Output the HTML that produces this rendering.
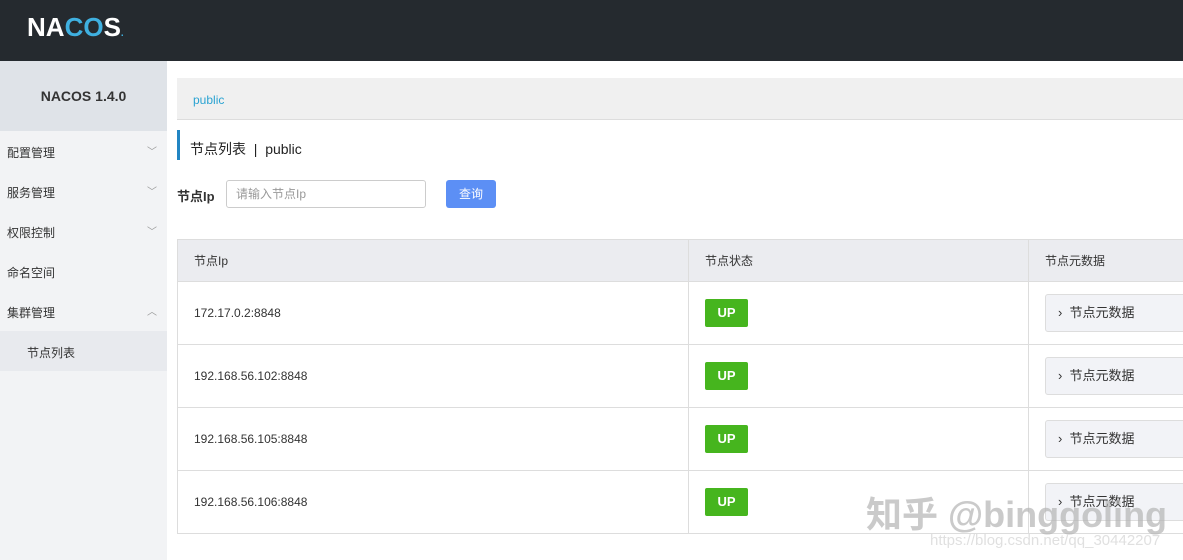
<!DOCTYPE html>
<html><head><meta charset="utf-8"><style>
*{margin:0;padding:0;box-sizing:border-box}
body{width:1183px;height:560px;overflow:hidden;background:#fff;font-family:"Liberation Sans","Noto Sans CJK SC",sans-serif;color:#333;position:relative}
.top{position:absolute;left:0;top:0;width:1183px;height:61px;background:#252a2f}
.logo{position:absolute;left:27px;top:12px;color:#fff;font-size:26px;font-weight:bold;letter-spacing:0px}
.side{position:absolute;left:0;top:61px;width:167px;height:499px;background:#f2f3f5}
.ver{height:70px;background:#dfe3e8;text-align:center;line-height:70px;font-weight:bold;font-size:14px;color:#333}
.mi{height:40px;line-height:44px;padding-left:7px;font-size:12px;color:#333;position:relative}
.mi .ar{position:absolute;right:10px;top:0;color:#999;font-size:10px}
.sub{background:#e8eaee;padding-left:27px}
.bc{position:absolute;left:177px;top:78px;width:1006px;height:42px;background:#f0f0f0;border-bottom:1px solid #ddd;color:#2aa3d2;font-size:12px;line-height:44px;padding-left:16px}
.tt{position:absolute;left:177px;top:130px;height:30px;border-left:3px solid #2285c3;padding-left:10px;line-height:38px;font-size:14px;color:#222}
.lab{position:absolute;left:177px;top:186px;font-weight:bold;font-size:13px}
.inp{position:absolute;left:226px;top:180px;width:200px;height:28px;border:1px solid #ccc;border-radius:3px;font-size:12px;color:#999;line-height:26px;padding-left:9px}
.btn{position:absolute;left:446px;top:180px;width:50px;height:28px;background:#5c8ff5;border-radius:3px;color:#fff;font-size:12px;text-align:center;line-height:28px}
table{position:absolute;left:177px;top:239px;border-collapse:collapse;width:1020px}
td{border:1px solid #ddd;font-size:12px;padding-left:16px;height:63px}
tr.h td{background:#ebecf0;height:42px}
.up{display:inline-block;width:43px;height:28px;background:#46b51e;color:#fff;border-radius:2px;text-align:center;line-height:28px;font-weight:bold;font-size:13px}
.md{display:inline-block;width:150px;height:38px;background:#f2f3f7;border:1px solid #ddd;border-radius:3px;line-height:36px;padding-left:12px;font-size:13px}
.wm{position:absolute;left:866px;top:486px;font-size:36px;color:rgba(180,180,180,.7);font-weight:bold}
.wm2{position:absolute;left:930px;top:532px;font-size:15px;color:#e0e0e0}
</style></head><body>
<div class="top"><div class="logo">NA<span style="color:#3fb0e0">CO</span>S<span style="color:#3fb0e0;font-size:10px">.</span></div></div>
<div class="side"><div class="ver">NACOS 1.4.0</div>
<div class="mi">配置管理<span class="ar">﹀</span></div>
<div class="mi">服务管理<span class="ar">﹀</span></div>
<div class="mi">权限控制<span class="ar">﹀</span></div>
<div class="mi">命名空间</div>
<div class="mi">集群管理<span class="ar">︿</span></div>
<div class="mi sub">节点列表</div></div>
<div class="bc">public</div>
<div class="tt">节点列表 &nbsp;| &nbsp;public</div>
<div class="lab">节点Ip</div><div class="inp">请输入节点Ip</div><div class="btn">查询</div>
<table>
<tr class="h"><td style="width:511px">节点Ip</td><td style="width:340px">节点状态</td><td>节点元数据</td></tr>
<tr><td>172.17.0.2:8848</td><td><span class="up">UP</span></td><td><span class="md">›&nbsp; 节点元数据</span></td></tr>
<tr><td>192.168.56.102:8848</td><td><span class="up">UP</span></td><td><span class="md">›&nbsp; 节点元数据</span></td></tr>
<tr><td>192.168.56.105:8848</td><td><span class="up">UP</span></td><td><span class="md">›&nbsp; 节点元数据</span></td></tr>
<tr><td>192.168.56.106:8848</td><td><span class="up">UP</span></td><td><span class="md">›&nbsp; 节点元数据</span></td></tr>
</table>
<div class="wm">知乎 @binggoling</div>
<div class="wm2">https://blog.csdn.net/qq_30442207</div>
</body></html>
